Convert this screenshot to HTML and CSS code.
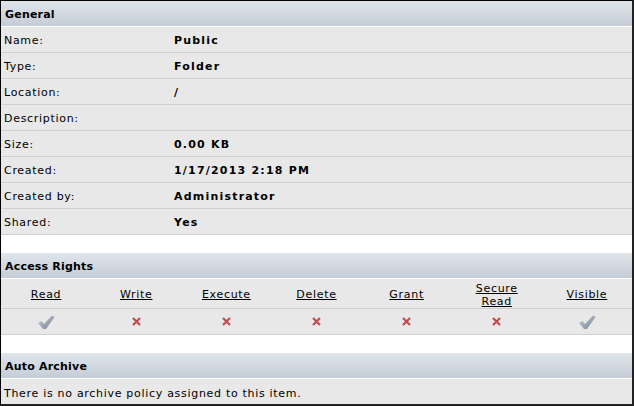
FILE: index.html
```html
<!DOCTYPE html>
<html>
<head>
<meta charset="utf-8">
<link rel="stylesheet" href="styles.css">
</head>
<body>
<div class="panel">
  <div class="hdr">General</div>
  <div class="row"><span class="lbl">Name:</span><span class="val">Public</span></div>
  <div class="row"><span class="lbl">Type:</span><span class="val">Folder</span></div>
  <div class="row"><span class="lbl">Location:</span><span class="val">/</span></div>
  <div class="row"><span class="lbl">Description:</span><span class="val"></span></div>
  <div class="row"><span class="lbl">Size:</span><span class="val">0.00 KB</span></div>
  <div class="row"><span class="lbl">Created:</span><span class="val">1/17/2013 2:18 PM</span></div>
  <div class="row"><span class="lbl">Created by:</span><span class="val">Administrator</span></div>
  <div class="row"><span class="lbl">Shared:</span><span class="val">Yes</span></div>
  <div class="gap"></div>

  <div class="hdr">Access Rights</div>
  <div class="rights links">
    <a class="cell">Read</a>
    <a class="cell">Write</a>
    <a class="cell">Execute</a>
    <a class="cell">Delete</a>
    <a class="cell">Grant</a>
    <a class="cell">Secure<br>Read</a>
    <a class="cell">Visible</a>
  </div>
  <div class="rights icons">
    <span class="cell"><svg class="chk" width="18" height="16" viewBox="0 0 18 16"><defs><linearGradient id="g1" x1="0" y1="0" x2="1" y2="1"><stop offset="0" stop-color="#c8d1dc"/><stop offset="1" stop-color="#75808f"/></linearGradient></defs><path d="M1 9 L4.5 7 L7 10 L15 1.5 L17.5 3 L9 15 L6 15 Z" fill="url(#g1)"/></svg></span>
    <span class="cell"><svg class="x" width="9" height="9" viewBox="0 0 9 9"><path d="M1 1 L8 8 M8 1 L1 8" stroke="#c9494b" stroke-width="2.2"/></svg></span>
    <span class="cell"><svg class="x" width="9" height="9" viewBox="0 0 9 9"><path d="M1 1 L8 8 M8 1 L1 8" stroke="#c9494b" stroke-width="2.2"/></svg></span>
    <span class="cell"><svg class="x" width="9" height="9" viewBox="0 0 9 9"><path d="M1 1 L8 8 M8 1 L1 8" stroke="#c9494b" stroke-width="2.2"/></svg></span>
    <span class="cell"><svg class="x" width="9" height="9" viewBox="0 0 9 9"><path d="M1 1 L8 8 M8 1 L1 8" stroke="#c9494b" stroke-width="2.2"/></svg></span>
    <span class="cell"><svg class="x" width="9" height="9" viewBox="0 0 9 9"><path d="M1 1 L8 8 M8 1 L1 8" stroke="#c9494b" stroke-width="2.2"/></svg></span>
    <span class="cell"><svg class="chk" width="18" height="16" viewBox="0 0 18 16"><path d="M1 9 L4.5 7 L7 10 L15 1.5 L17.5 3 L9 15 L6 15 Z" fill="url(#g1)"/></svg></span>
  </div>
  <div class="gap"></div>

  <div class="hdr">Auto Archive</div>
  <div class="row last"><span class="lbl">There is no archive policy assigned to this item.</span></div>
</div>
</body>
</html>
```
FILE: styles.css
```css
html, body {
  margin: 0;
  padding: 0;
  background: #fff;
}
.panel {
  width: 631px;
  height: 403px;
  border-top: 1px solid #000;
  border-left: 1px solid #000;
  border-right: 2px solid #222;
  border-bottom: 2px solid #222;
  font-family: "DejaVu Sans", Verdana, sans-serif;
  font-size: 11px;
  color: #000;
  display: flex;
  flex-direction: column;
  overflow: hidden;
}
.hdr {
  box-sizing: border-box;
  height: 26px;
  padding-top: 2px;
  line-height: 23px;
  padding-left: 4px;
  font-weight: bold;
  letter-spacing: 0.2px;
  background: linear-gradient(#dfe5eb, #c4ccd6);
  border-bottom: 1px solid #fff;
  flex: none;
}
.row {
  box-sizing: border-box;
  height: 26px;
  padding-top: 2px;
  display: flex;
  align-items: center;
  background: #e8e8e8;
  border-bottom: 1px solid #d0d0d0;
  flex: none;
}
.row.last {
  border-bottom: none;
}
.lbl {
  width: 170px;
  padding-left: 3px;
  white-space: nowrap;
  letter-spacing: 0.7px;
}
.val {
  font-weight: bold;
  letter-spacing: 1.2px;
}
.gap {
  height: 18px;
  flex: none;
}
.rights {
  display: grid;
  grid-template-columns: repeat(7, 1fr);
  background: #e8e8e8;
  border-bottom: 1px solid #d0d0d0;
  flex: none;
}
.rights.links {
  box-sizing: border-box;
  height: 30px;
  padding-top: 2px;
}
.rights.icons {
  height: 25px;
}
.cell {
  display: flex;
  align-items: center;
  justify-content: center;
  text-align: center;
  line-height: 13px;
}
.links .cell {
  text-decoration: underline;
  letter-spacing: 0.7px;
  color: #000;
  cursor: pointer;
}
```
